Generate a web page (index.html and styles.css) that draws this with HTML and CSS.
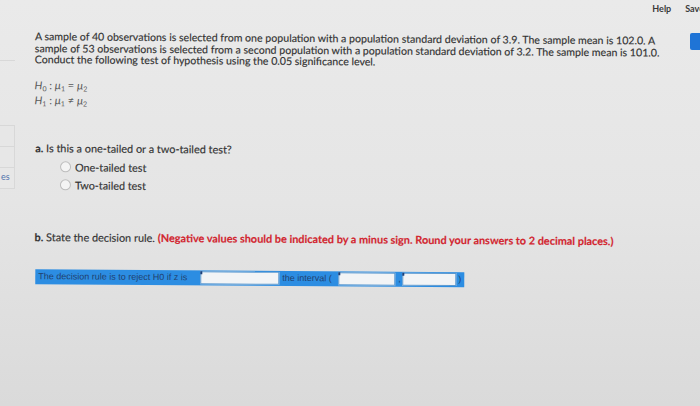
FILE: index.html
```html
<!DOCTYPE html>
<html lang="en">
<head>
<meta charset="utf-8">
<title>Question</title>
<link rel="stylesheet" href="styles.css">
</head>
<body>
<div class="page">
  <aside class="sidebar">
    <div class="sb-top"></div>
    <div class="sb-box"></div>
    <div class="sb-box"></div>
    <div class="sb-box sb-label">es</div>
  </aside>
  <header class="topbar">
    <span class="top-link">Help</span>
    <span class="top-link">Save</span>
  </header>
  <main class="content">
    <p class="intro">A sample of 40 observations is selected from one population with a population standard deviation of 3.9. The sample mean is 102.0. A sample of 53 observations is selected from a second population with a population standard deviation of 3.2. The sample mean is 101.0. Conduct the following test of hypothesis using the 0.05 significance level.</p>
    <div class="hyp">
      <div><i>H</i><sub>0</sub> : <i>μ</i><sub>1</sub> = <i>μ</i><sub>2</sub></div>
      <div><i>H</i><sub>1</sub> : <i>μ</i><sub>1</sub> ≠ <i>μ</i><sub>2</sub></div>
    </div>
    <p class="q"><b>a.</b> Is this a one-tailed or a two-tailed test?</p>
    <div class="options">
      <label class="opt"><span class="radio"></span>One-tailed test</label>
      <label class="opt"><span class="radio"></span>Two-tailed test</label>
    </div>
    <p class="q qb"><b>b.</b> State the decision rule. <span class="warn">(Negative values should be indicated by a minus sign. Round your answers to 2 decimal places.)</span></p>
    <div class="rule">
      <span class="cell lbl1">The decision rule is to reject H0 if z is</span>
      <span class="input in1"></span>
      <span class="cell lbl2">the interval (</span>
      <span class="input in2"></span>
      <span class="cell sep">,</span>
      <span class="input in3"></span>
      <span class="cell close">)</span>
    </div>
  </main>
  <div class="rail">
    <div class="rail-btn"></div>
  </div>
</div>
</body>
</html>
```
FILE: styles.css
```css
html, body {
  margin: 0;
  padding: 0;
}
body {
  width: 700px;
  height: 406px;
  overflow: hidden;
  background: linear-gradient(180deg, #eaeaea 0%, #e5e5e5 50%, #dadada 100%);
  font-family: Lato, "Open Sans", Arial, sans-serif;
  color: #333333;
}
.page {
  display: grid;
  grid-template-columns: 15px 1fr 10px;
  grid-template-rows: 30px 1fr;
  height: 406px;
}
.sidebar {
  grid-column: 1;
  grid-row: 1 / span 2;
  display: flex;
  flex-direction: column;
  padding-top: 60px;
}
.sb-top {
  border-top: 1px solid #d8d8d8;
  height: 64px;
}
.sb-box {
  height: 20px;
  border: 1px solid #d8d8d8;
  border-left: none;
  background: #e7e7e7;
}
.sb-box + .sb-box {
  border-top: none;
}
.sb-label {
  font-size: 9px;
  line-height: 18px;
  color: #5273ad;
  padding-left: 1px;
  overflow: hidden;
}
.topbar {
  grid-column: 2 / span 2;
  grid-row: 1;
  display: flex;
  justify-content: flex-end;
  align-items: flex-start;
  gap: 14px;
  padding-top: 3px;
  margin-right: -4px;
  overflow: hidden;
}
.top-link {
  font-size: 9px;
  font-weight: 700;
  color: #3a3a3a;
}
.content {
  grid-column: 2;
  grid-row: 2;
  padding-left: 20px;
  padding-right: 30px;
  transform-origin: 0 0;
  transform: rotate(0.4deg);
  -webkit-text-stroke: 0.15px currentColor;
}
.intro {
  margin: 1px 0 0;
  font-size: 10.6px;
  line-height: 11.6px;
}
.hyp {
  margin-top: 13px;
  font-size: 11px;
  line-height: 12.5px;
  color: #5a5a5a;
  -webkit-text-stroke: 0;
}
.hyp sub {
  font-size: 7px;
  vertical-align: -2px;
}
.q {
  margin: 32px 0 0 1px;
  font-size: 10.9px;
  line-height: 12px;
}
.q b {
  font-weight: 700;
}
.options {
  display: flex;
  flex-direction: column;
  gap: 6px;
  margin-top: 7px;
  padding-left: 26px;
}
.opt {
  display: flex;
  align-items: center;
  gap: 4px;
  font-size: 10.8px;
  line-height: 12px;
}
.radio {
  width: 9px;
  height: 9px;
  border-radius: 50%;
  border: 1px solid #bdbdbd;
  background: #f4f4f4;
}
.qb {
  margin-top: 40px;
}
.warn {
  color: #d22630;
  font-weight: 700;
}
.rule {
  display: flex;
  align-items: stretch;
  margin-top: 26px;
  margin-left: 2px;
  width: fit-content;
  height: 15px;
  background: #2c8de2;
  font-family: "Liberation Sans", Arial, sans-serif;
  font-size: 9px;
  color: #21416f;
  -webkit-text-stroke: 0;
}
.cell {
  display: flex;
  align-items: center;
  padding: 0 3px;
}
.lbl1 { width: 159px; }
.lbl2 { width: 53px; }
.sep { width: 1px; }
.close { width: 2px; justify-content: flex-end; }
.input {
  position: relative;
  background: #f2f4f6;
  border: 1px solid #5a98cf;
  margin: 1px 0;
}
.input::before {
  content: "";
  position: absolute;
  left: -1px;
  top: -1px;
  width: 2px;
  height: 3px;
  background: #1a3f7a;
}
.in1 { width: 77px; }
.in2 { width: 55px; }
.in3 { width: 52px; }
.rail {
  grid-column: 3;
  grid-row: 2;
  padding-top: 3px;
}
.rail-btn {
  width: 10px;
  height: 17px;
  background: #1f74d6;
  border-radius: 2px 0 0 2px;
}
```
